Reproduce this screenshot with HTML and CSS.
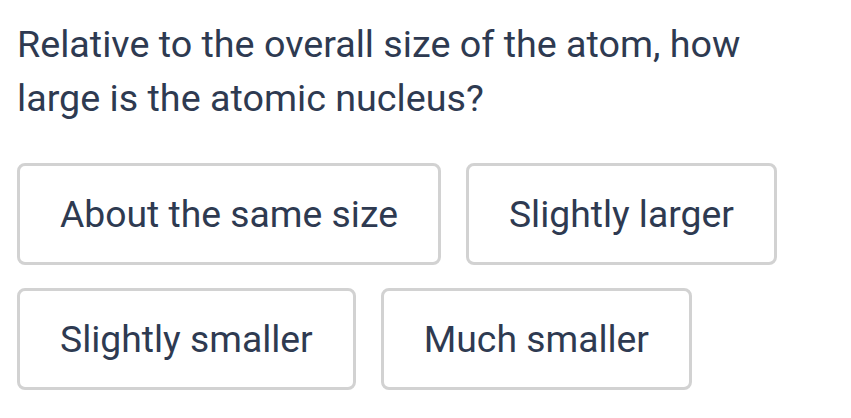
FILE: index.html
```html
<!DOCTYPE html>
<html lang="en">
<head>
    <meta charset="UTF-8">
    <meta name="viewport" content="width=device-width, initial-scale=1.0">
    <title>Quiz question</title>
    <link rel="stylesheet" href="styles.css">
</head>
<body>
    <div class="quiz">
        <h2 class="question">Relative to the overall size of the atom, how large is the atomic nucleus?</h2>

        <!-- answer choices -->
        <div class="choices">
            <button class="choice">About the same size</button>
            <button class="choice">Slightly larger</button>
            <button class="choice">Slightly smaller</button>
            <button class="choice">Much smaller</button>
        </div>
    </div>
</body>
</html>
```

FILE: styles.css
```css
body {
    margin: 0;
    background: #fff;
    font-family: Roboto, "Noto Sans", sans-serif;
    color: #2e3a51;
}
.quiz { padding: 17px 17px; }
.question {
    margin: 0;
    width: 780px;
    font-size: 37.7px;
    font-weight: 400;
    line-height: 54px;
}
.choices {
    display: flex;
    flex-wrap: wrap;
    gap: 23px 25px;
    width: 790px;
    margin-top: 38px;
}
.choice {
    height: 102px;
    padding: 0 40px;
    background: #fff;
    border: 3px solid #d2d2d2;
    border-radius: 8px;
    font-family: inherit;
    font-size: 37.3px;
    color: inherit;
    cursor: pointer;
}
```
